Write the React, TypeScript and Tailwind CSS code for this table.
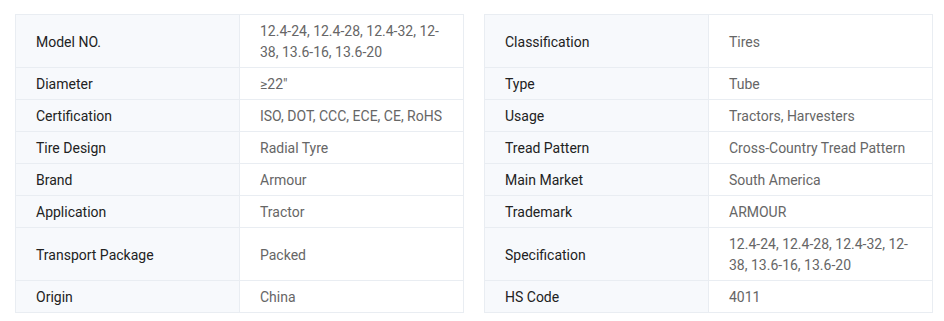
import React from "react";

const rows: [string, string, string, string][] = [
  ["Model NO.", "12.4-24, 12.4-28, 12.4-32, 12-38, 13.6-16, 13.6-20", "Classification", "Tires"],
  ["Diameter", "≥22\"", "Type", "Tube"],
  ["Certification", "ISO, DOT, CCC, ECE, CE, RoHS", "Usage", "Tractors, Harvesters"],
  ["Tire Design", "Radial Tyre", "Tread Pattern", "Cross-Country Tread Pattern"],
  ["Brand", "Armour", "Main Market", "South America"],
  ["Application", "Tractor", "Trademark", "ARMOUR"],
  ["Transport Package", "Packed", "Specification", "12.4-24, 12.4-28, 12.4-32, 12-38, 13.6-16, 13.6-20"],
  ["Origin", "China", "HS Code", "4011"],
];

function Half({ k, v, last }: { k: string; v: string; last: boolean }) {
  return (
    <div className={`w-[449px] flex border-x border-t border-[#e9edf2] ${last ? "border-b" : ""}`}>
      <div className="w-[224px] shrink-0 border-r border-[#e9edf2] bg-[#f7f9fc] px-5 pt-[6px] pb-[4px] flex items-center text-[#222222]">
        {k}
      </div>
      <div className="flex-1 px-5 pt-[6px] pb-[4px] flex items-center text-[#666666]">{v}</div>
    </div>
  );
}

export default function App() {
  return (
    <div
      className="w-[944px] h-[321px] bg-white pt-[14px] pl-[15px] flex flex-col text-[14px] leading-[21px]"
      style={{ fontFamily: "Roboto, 'Liberation Sans', sans-serif" }}
    >
      {rows.map(([a, b, c, d], i) => (
        <div key={a} className="flex items-stretch gap-[20px]">
          <Half k={a} v={b} last={i === rows.length - 1} />
          <Half k={c} v={d} last={i === rows.length - 1} />
        </div>
      ))}
    </div>
  );
}
